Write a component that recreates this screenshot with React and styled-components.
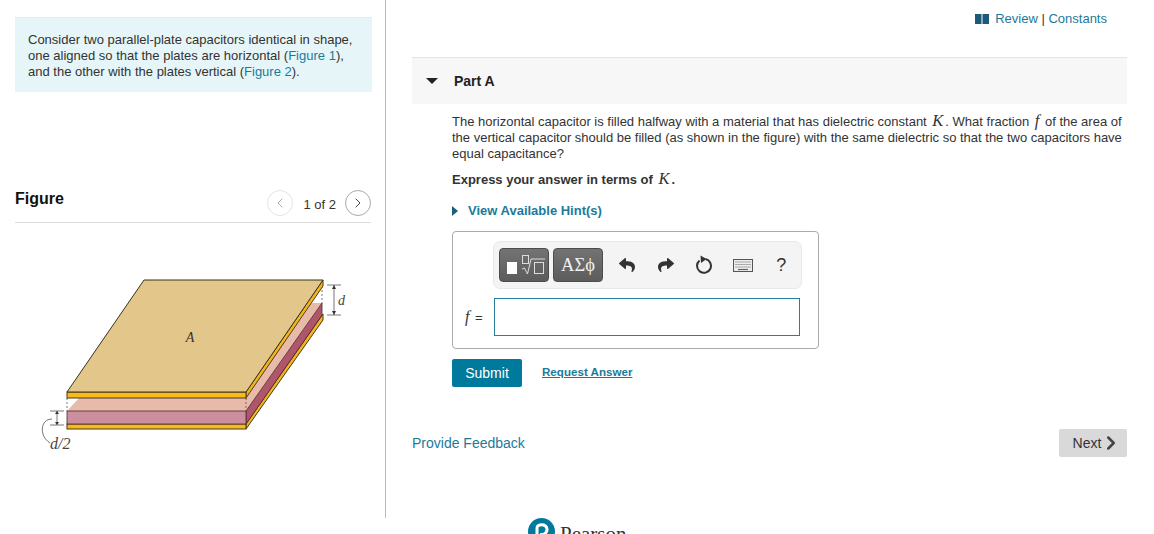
import React from 'react';
import styled, { createGlobalStyle } from 'styled-components';
import { FaReply, FaShare } from 'react-icons/fa';
import { ChevronLeft, ChevronRight } from 'lucide-react';

const GlobalStyle = createGlobalStyle`
    html, body {
        margin: 0;
        padding: 0;
        height: 534px;
        overflow: hidden;
        background: #fff;
    }
    body {
        font-family: "Liberation Sans", Arial, sans-serif;
        color: #333;
    }
`

const Page = styled.div`
    width: 1154px;
    height: 534px;
    overflow: hidden;
    display: flex;
    flex-direction: row;
    align-items: flex-start;
`

const LeftPane = styled.aside`
    width: 386px;
    height: 518px;
    flex-shrink: 0;
    box-sizing: border-box;
    border-right: 1px solid #a9bdd6;
    padding: 17px 13px 0 15px;
`

const Intro = styled.div`
    background: #e6f6f8;
    border-top: 1px solid #e0ecee;
    box-sizing: border-box;
    height: 75px;
    padding: 14px 14px 0 13px;
    font-size: 13px;
    line-height: 16px;
`

const Anchor = styled.a`
    color: #1c7a99;
    text-decoration: none;
`

const FigureHeader = styled.div`
    margin-top: 96px;
    margin-right: 1px;
    height: 34px;
    border-bottom: 1px solid #ddd;
    display: flex;
    flex-direction: row;
    justify-content: space-between;
    align-items: flex-start;
`

const FigureTitle = styled.div`
    font-size: 16px;
    font-weight: bold;
    color: #111;
    line-height: 20px;
    margin-top: 1px;
`

const Pager = styled.div`
    display: flex;
    align-items: center;
    gap: 10px;
    font-size: 13px;
    margin-top: 2px;
`

const PagerLabel = styled.span`
    margin-top: 3px;
    margin-right: -1px;
`

const PagerButton = styled.span`
    width: 26px;
    height: 26px;
    box-sizing: border-box;
    border-radius: 50%;
    border: 1px solid ${p => (p.$off ? '#e4e4e4' : '#aaa')};
    color: ${p => (p.$off ? '#aaa' : '#444')};
    display: flex;
    align-items: center;
    justify-content: center;
`

const FigureDrawing = styled.svg`
    display: block;
    margin-top: 37px;
    margin-left: -15px;
`

const RightPane = styled.main`
    width: 715px;
    margin-left: 26px;
    flex-shrink: 0;
    display: flex;
    flex-direction: column;
`

const TopLinks = styled.div`
    height: 57px;
    box-sizing: border-box;
    padding: 11px 20px 0 0;
    display: flex;
    justify-content: flex-end;
    align-items: flex-start;
    gap: 6px;
    font-size: 13px;
    line-height: 16px;
    color: #333;
`

const BookIcon = styled.svg`
    margin-top: 3px;
`

const PartHeader = styled.div`
    height: 46px;
    background: #f7f7f7;
    border-top: 1px solid #e4e4e4;
    display: flex;
    align-items: center;
    font-size: 14px;
    font-weight: bold;
    color: #222;
`

const DownTriangle = styled.span`
    width: 0;
    height: 0;
    margin: 0 16px 0 14px;
    border-left: 6px solid transparent;
    border-right: 6px solid transparent;
    border-top: 6px solid #222;
`

const Content = styled.div`
    padding-left: 40px;
    display: flex;
    flex-direction: column;
    align-items: flex-start;
`

const Question = styled.p`
    margin: 9px 0 0;
    width: 675px;
    font-size: 13px;
    line-height: 16px;
    color: #333;
`

const Instruction = styled.p`
    margin: 9px 0 0;
    font-size: 13px;
    font-weight: bold;
    line-height: 16px;
`

const MathVar = styled.i`
    font-family: "Liberation Serif", serif;
    font-size: 16.5px;
    line-height: 1;
    font-weight: normal;
    margin: 0 2px;
`

const HintRow = styled.div`
    margin-top: 15px;
    display: flex;
    align-items: center;
    gap: 10px;
    font-size: 13px;
    font-weight: bold;
    line-height: 16px;
    color: #1c7a99;
`

const RightTriangle = styled.span`
    width: 0;
    height: 0;
    border-top: 5px solid transparent;
    border-bottom: 5px solid transparent;
    border-left: 6px solid #1b5f78;
`

const AnswerBox = styled.div`
    margin-top: 12px;
    width: 367px;
    height: 118px;
    box-sizing: border-box;
    border: 1px solid #aaa;
    border-radius: 4px;
    padding: 9px 16px 0 12px;
    display: flex;
    flex-direction: column;
    align-items: flex-end;
`

const Toolbar = styled.div`
    width: 309px;
    height: 48px;
    box-sizing: border-box;
    background: #f4f4f4;
    border: 1px solid #e8e8e8;
    border-radius: 7px;
    padding: 6px 0 0 5px;
    display: flex;
    align-items: flex-start;
`

const TemplateButton = styled.div`
    width: 50px;
    height: 34px;
    box-sizing: border-box;
    margin-right: 4px;
    border-radius: 4px;
    border: 1px solid #4d4d4d;
    background: linear-gradient(#737373, #5c5c5c);
    color: #f2f2f2;
    display: flex;
    align-items: center;
    justify-content: center;
    font-family: "Liberation Serif", serif;
    font-size: 18.5px;
`

const ToolIcon = styled.span`
    width: 38.5px;
    height: 34px;
    margin-left: ${p => (p.$first ? 1 : 0)}px;
    display: flex;
    align-items: center;
    justify-content: center;
    color: #333;
    font-size: 18px;
`

const InputRow = styled.div`
    margin-top: 9px;
    width: 100%;
    display: flex;
    align-items: center;
    justify-content: space-between;
`

const EqLabel = styled.span`
    font-size: 13px;
    word-spacing: 2px;
    color: #333;
`

const EqVar = styled.i`
    font-family: "Liberation Serif", serif;
    font-size: 16px;
`

const AnswerInput = styled.div`
    width: 306px;
    height: 38px;
    margin-right: 2px;
    box-sizing: border-box;
    border: 1px solid #2b7d9c;
    background: #fff;
`

const Actions = styled.div`
    margin-top: 10px;
    display: flex;
    align-items: center;
    gap: 20px;
`

const SubmitButton = styled.div`
    width: 70px;
    height: 28px;
    background: #007a9c;
    border-radius: 2px;
    color: #fff;
    font-size: 14px;
    font-weight: 500;
    display: flex;
    align-items: center;
    justify-content: center;
`

const RequestLink = styled.a`
    font-size: 11.6px;
    font-weight: bold;
    color: #1c7a99;
    text-decoration: underline;
    margin-top: -3px;
`

const BottomRow = styled.div`
    margin-top: 42px;
    display: flex;
    justify-content: space-between;
    align-items: flex-start;
`

const FeedbackLink = styled.a`
    font-size: 14px;
    line-height: 28px;
    color: #1c7a99;
`

const NextButton = styled.div`
    width: 68px;
    height: 28px;
    background: #d9d9d9;
    border-radius: 2px;
    color: #333;
    font-size: 14px;
    display: flex;
    align-items: center;
    justify-content: center;
`

const NextChevron = styled(ChevronRight)`
    margin: 0 -9px 0 -1px;
    color: #444;
`

const Brand = styled.div`
    margin-top: 61px;
    margin-left: 116px;
    display: flex;
    align-items: flex-start;
    gap: 5px;
`

const BrandName = styled.span`
    font-family: "Liberation Serif", serif;
    font-size: 21px;
    line-height: 24px;
    margin-top: 4px;
    color: #333;
`

const CapacitorFigure = () => (
    <FigureDrawing width="385" height="200" viewBox="0 260 385 200">
        {/* bottom plate */}
        <polygon points="246,424 323,314 323,320 246,429" fill="#f2b51f" stroke="#4a3a15" strokeWidth="1" />
        <rect x="67" y="424" width="179" height="5" fill="#f7b91c" stroke="#4a3a15" strokeWidth="1" />
        {/* dielectric */}
        <polygon points="80,397 246,397 312,303 322,303 246,411 67,411" fill="#e8baa9" />
        <polygon points="246,411 322,303 322,315 246,424" fill="#b0566b" stroke="#4d2a30" strokeWidth="0.8" />
        <rect x="67" y="411" width="179" height="13" fill="#cc8f9f" stroke="#4d2a30" strokeWidth="0.8" />
        {/* dashed edges */}
        <path d="M67 398 V411 M246 398 V411 M322 286 V303" stroke="#555" strokeWidth="0.8" strokeDasharray="2 2" fill="none" />
        {/* top plate */}
        <polygon points="246,392 323,280 323,286 246,398" fill="#f2b51f" stroke="#4a3a15" strokeWidth="1" />
        <rect x="67" y="392" width="179" height="6" fill="#f7b91c" stroke="#4a3a15" strokeWidth="1" />
        <polygon points="144,280 323,280 246,392 67,392" fill="#e2c68a" stroke="#3b3320" strokeWidth="1" />
        <text x="190" y="342" fontFamily="Liberation Serif" fontStyle="italic" fontSize="14" fill="#333" textAnchor="middle">A</text>
        {/* d */}
        <path d="M327 285 H341 M327 315 H341 M334 285 V315" stroke="#555" strokeWidth="0.8" fill="none" />
        <path d="M334 285 l-2 4 h4 Z M334 315 l-2 -4 h4 Z" fill="#333" />
        <text x="338" y="305" fontFamily="Liberation Serif" fontStyle="italic" fontSize="14" fill="#444">d</text>
        {/* d/2 */}
        <path d="M50 411 H64 M50 425 H64 M57 411 V425" stroke="#555" strokeWidth="0.8" fill="none" />
        <path d="M57 411 l-2 3 h4 Z M57 425 l-2 -3 h4 Z" fill="#333" />
        <path d="M52 419 C43 419 41 428 43 434 C44 438 47 441 50 443" stroke="#555" strokeWidth="0.8" fill="none" />
        <text x="50" y="449" fontFamily="Liberation Serif" fontStyle="italic" fontSize="16" fill="#444">d/2</text>
    </FigureDrawing>
)

const TemplateIcon = () => (
    <svg width="48" height="32" viewBox="0 0 48 32">
        <rect x="7" y="13" width="10" height="12" fill="#fff" />
        <rect x="22.5" y="6.5" width="6" height="8" fill="none" stroke="#ddd" strokeWidth="1" />
        <path d="M22 20 l2.5 -1 l3 6 l3.5 -15 h14" fill="none" stroke="#ddd" strokeWidth="1" />
        <rect x="34.5" y="13.5" width="9" height="11" fill="none" stroke="#ddd" strokeWidth="1" />
    </svg>
)

const ResetIcon = () => (
    <svg width="20" height="20" viewBox="0 0 20 20">
        <path d="M11.5 4 A7 7 0 1 1 5.5 5.5" fill="none" stroke="#333" strokeWidth="2" />
        <path d="M6.5 0.5 L12.5 4 L7 8 Z" fill="#333" />
    </svg>
)

const KeyboardIcon = () => (
    <svg width="20" height="13" viewBox="0 0 20 13">
        <rect x="0.5" y="0.5" width="19" height="12" fill="#ededed" stroke="#555" />
        <path d="M2.5 3 H17.5 M2.5 5.5 H17.5 M2.5 8 H17.5" stroke="#666" strokeWidth="1.2" strokeDasharray="1 1" />
        <path d="M5 10.5 H15" stroke="#666" strokeWidth="1.2" />
    </svg>
)

const PearsonLogo = () => (
    <svg width="27" height="27" viewBox="0 0 27 27">
        <circle cx="13.5" cy="13.5" r="13.5" fill="#007a9c" />
        <path d="M9 22 V10 C9 6 18 5 19 11 C19.5 16 14 17 12 16" fill="none" stroke="#fff" strokeWidth="3" />
    </svg>
)

export default function App() {
    return (
        <Page>
            <GlobalStyle />
            <LeftPane>
                <Intro>
                    Consider two parallel-plate capacitors identical in shape, one aligned so that the plates are horizontal (<Anchor>Figure 1</Anchor>), and the other with the plates vertical (<Anchor>Figure 2</Anchor>).
                </Intro>
                <FigureHeader>
                    <FigureTitle>Figure</FigureTitle>
                    <Pager>
                        <PagerButton $off><ChevronLeft size={16} strokeWidth={1.5} /></PagerButton>
                        <PagerLabel>1 of 2</PagerLabel>
                        <PagerButton><ChevronRight size={16} strokeWidth={1.5} /></PagerButton>
                    </Pager>
                </FigureHeader>
                <CapacitorFigure />
            </LeftPane>
            <RightPane>
                <TopLinks>
                    <BookIcon width="14" height="10" viewBox="0 0 14 10">
                        <rect x="0" y="0" width="6.5" height="10" fill="#1b5a78" />
                        <rect x="7.5" y="0" width="6.5" height="10" fill="#1b5a78" />
                    </BookIcon>
                    <span><Anchor>Review</Anchor> | <Anchor>Constants</Anchor></span>
                </TopLinks>
                <PartHeader>
                    <DownTriangle />
                    Part A
                </PartHeader>
                <Content>
                    <Question>
                        The horizontal capacitor is filled halfway with a material that has dielectric constant <MathVar>K</MathVar>. What fraction <MathVar>f</MathVar> of the area of the vertical capacitor should be filled (as shown in the figure) with the same dielectric so that the two capacitors have equal capacitance?
                    </Question>
                    <Instruction>Express your answer in terms of <MathVar>K</MathVar>.</Instruction>
                    <HintRow><RightTriangle />View Available Hint(s)</HintRow>
                    <AnswerBox>
                        <Toolbar>
                            <TemplateButton><TemplateIcon /></TemplateButton>
                            <TemplateButton>ΑΣϕ</TemplateButton>
                            <ToolIcon $first><FaReply size={16} /></ToolIcon>
                            <ToolIcon><FaShare size={16} /></ToolIcon>
                            <ToolIcon><ResetIcon /></ToolIcon>
                            <ToolIcon><KeyboardIcon /></ToolIcon>
                            <ToolIcon>?</ToolIcon>
                        </Toolbar>
                        <InputRow>
                            <EqLabel><EqVar>f</EqVar> =</EqLabel>
                            <AnswerInput />
                        </InputRow>
                    </AnswerBox>
                    <Actions>
                        <SubmitButton>Submit</SubmitButton>
                        <RequestLink>Request Answer</RequestLink>
                    </Actions>
                </Content>
                <BottomRow>
                    <FeedbackLink>Provide Feedback</FeedbackLink>
                    <NextButton>Next<NextChevron size={22} strokeWidth={2.7} /></NextButton>
                </BottomRow>
                <Brand>
                    <PearsonLogo />
                    <BrandName>Pearson</BrandName>
                </Brand>
            </RightPane>
        </Page>
    )
}
